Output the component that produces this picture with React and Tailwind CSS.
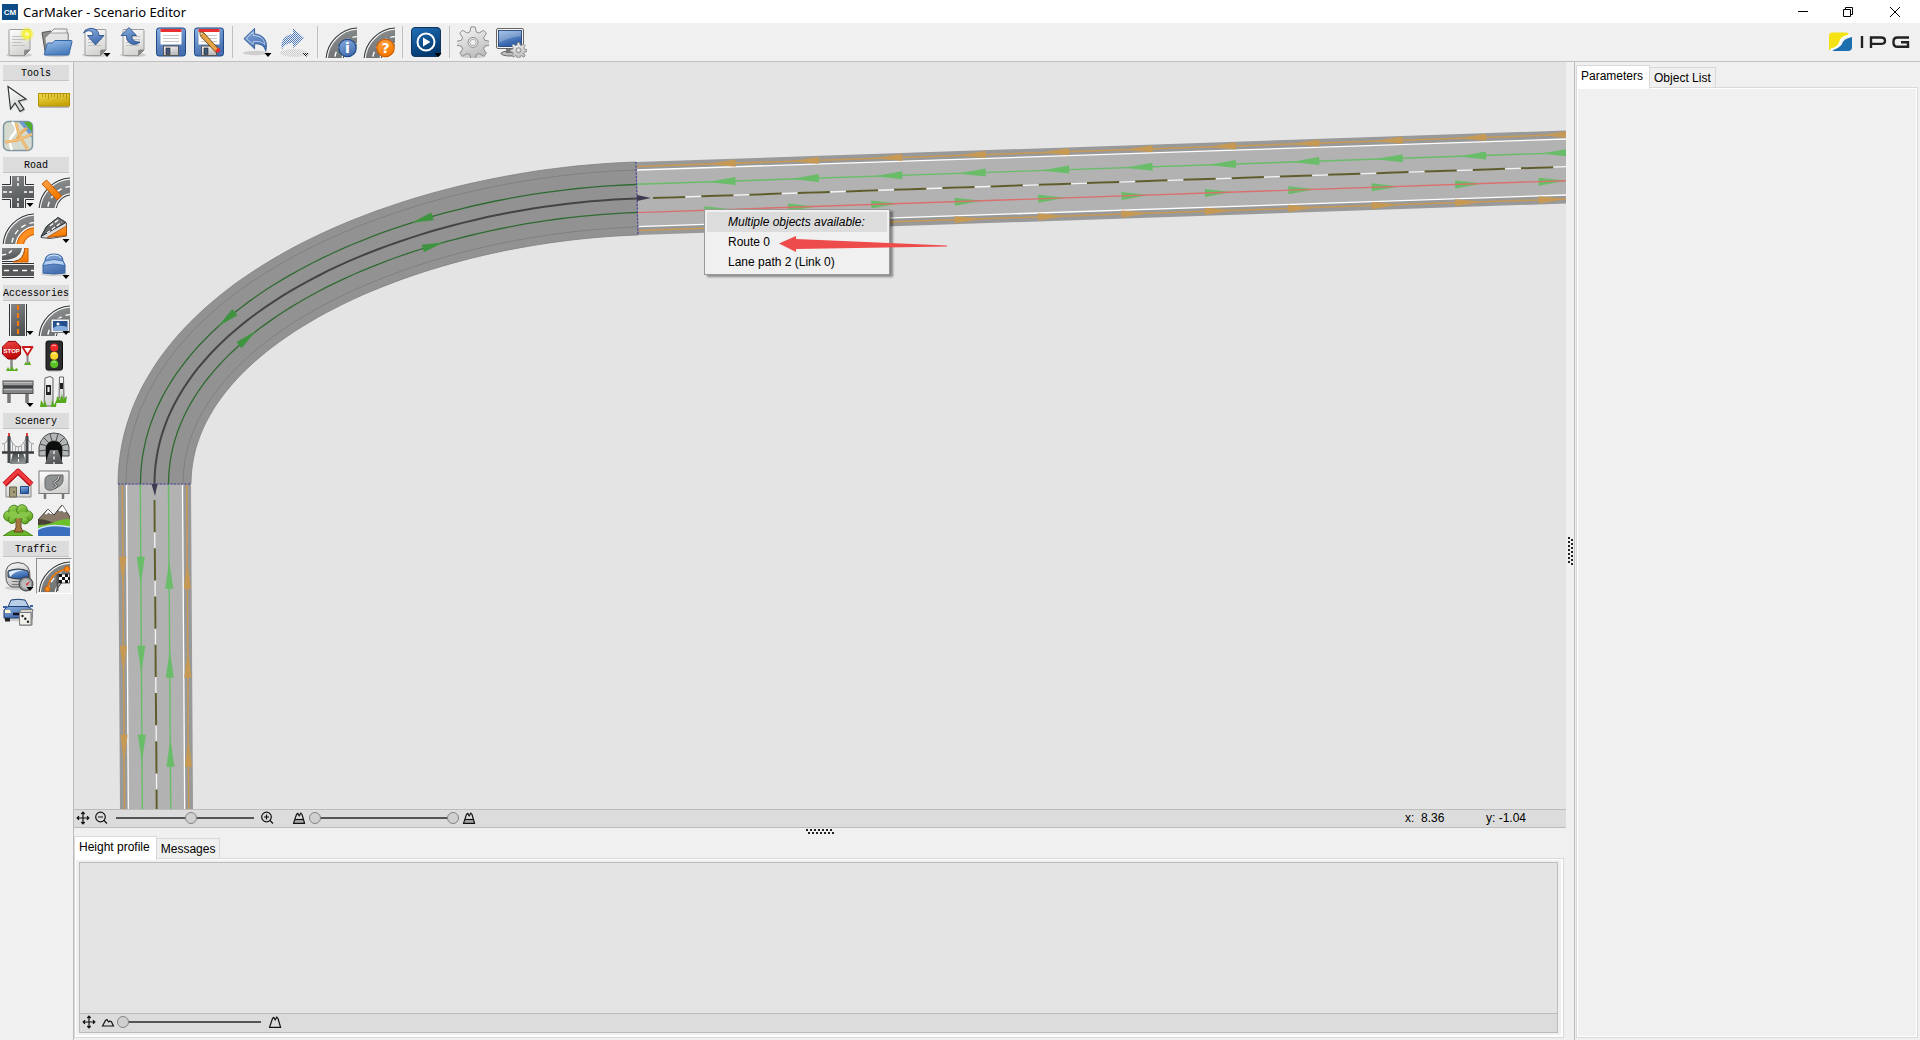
import React from "react";

/* ---------- shared gradients ---------- */
const GRADIENTS = [
  ["gPaper", "#ffffff", "#d4d4d2"],
  ["gBlue", "#9cc3ec", "#4a7dbd"],
  ["gDeep", "#1f6fb8", "#04396f"],
  ["gFloppy", "#8aaede", "#456fb0"],
  ["gMetal", "#fafafa", "#bcbcbc"],
  ["gDark", "#3e4244", "#8d9292"],
  ["gRoad", "#85898a", "#505455"],
  ["gOrange", "#ffa54a", "#f57900"],
  ["gGold", "#f2dc50", "#c9a508"],
  ["gGreen", "#a6dc6a", "#5ba318"],
  ["gRed", "#f04a4a", "#c00a0a"],
  ["gScreen", "#8fb4e4", "#2a5ba6"],
];

function Gradients() {
  return (
    <svg className="absolute h-0 w-0" aria-hidden="true">
      <defs>
        {GRADIENTS.map(([id, a, b]) => (
          <linearGradient key={id} id={id} x1="0" y1="0" x2="0.4" y2="1">
            <stop offset="0" stopColor={a} />
            <stop offset="1" stopColor={b} />
          </linearGradient>
        ))}
        <radialGradient id="gGlow">
          <stop offset="0" stopColor="#fffde0" />
          <stop offset="0.45" stopColor="#f6f02a" />
          <stop offset="1" stopColor="#f6f02a" stopOpacity="0" />
        </radialGradient>
      </defs>
    </svg>
  );
}

const Svg = ({ children }) => (
  <svg viewBox="0 0 32 32" className="block size-8" aria-hidden="true">{children}</svg>
);
const Caret = ({ color = "#000" }) => <path d="M24.500 27h7l-3.500 4z" fill={color} />;
const Shade = ({ y = 29, rx = 13 }) => <ellipse cx="16" cy={y} rx={rx} ry="2.2" fill="#000" opacity=".14" />;

const Sheet = () => (
  <>
    <Shade />
    <path d="M6 4.500q0-1 1-1h19q1 0 1 1V24l-5.500 5.500H7q-1 0-1-1z" fill="url(#gPaper)" stroke="#9b9d99" />
    <path d="M27 24h-4.500q-1 0-1 1v4.500z" fill="#8a8a88" stroke="#777" strokeWidth=".6" />
    <path d="M9 10.500h14M9 13.500h14M9 16.500h10M9 19.500h13" stroke="#c0c0c0" />
  </>
);

const Gear = ({ x, y, r }) => (
  <g transform={`translate(${x} ${y}) scale(${r / 16})`} stroke="#858784" strokeWidth={r > 10 ? 1 : 2}>
    <path
      fill="url(#gMetal)"
      strokeLinejoin="round"
      d="M-2.200-15h4.400l1.300 5.400 2.900 1.200 4.900-3 3 3.100-3 4.700 1.200 2.800 5.500 1.200v4l-5.500 1.200-1.200 2.900 3 4.700-3.100 3-4.700-2.900-3 1.200-1.200 5.300h-4.400l-1.200-5.300-3-1.200-4.700 2.900-3.100-3 3-4.700-1.200-2.900-5.500-1.200v-4l5.500-1.200 1.200-2.800-3-4.700 3-3.100 4.900 3 2.900-1.200z"
    />
    <circle r="5.300" cy="1.500" fill="#f0f0f0" />
    <circle r="3.400" cy="1.500" fill="none" strokeWidth=".7" />
  </g>
);

/* quarter bend of road */
const Bend = () => (
  <>
    <circle cx="34" cy="35" r="24.500" fill="none" stroke="#2e3436" strokeWidth="18" />
    <circle cx="34" cy="35" r="24.500" fill="none" stroke="#f4f4f4" strokeWidth="16" />
    <circle cx="34" cy="35" r="24.500" fill="none" stroke="url(#gRoad)" strokeWidth="13.500" />
    <circle cx="34" cy="35" r="24.500" fill="none" stroke="#fff" strokeWidth="1.400" strokeDasharray="5 4" />
  </>
);

const Badge = ({ fill, stroke, children }) => (
  <>
    <circle cx="22.500" cy="22" r="8.700" fill={fill} stroke={stroke} strokeWidth="1.200" />
    <text x="22.500" y="27" textAnchor="middle" fontFamily="DejaVu Sans, sans-serif" fontWeight="bold" fontSize="14" fill="#fff">{children}</text>
  </>
);

const Floppy = () => (
  <>
    <rect x="1.500" y="2" width="29" height="28" rx="2.500" fill="url(#gFloppy)" stroke="#204a87" />
    <rect x="5.500" y="3" width="21" height="15.500" fill="#fff" />
    <rect x="5.500" y="3" width="21" height="3" fill="#e83030" />
    <path d="M8 9.500h16M8 12.500h16M8 15.500h16" stroke="#c9c9c9" />
    <rect x="8.500" y="20" width="15" height="9.500" fill="url(#gMetal)" stroke="#555" />
    <rect x="11" y="22" width="4" height="6.500" fill="#44597a" stroke="#222" strokeWidth=".6" />
  </>
);

const CurvedArrow = "M1.500 12.500 13 1.500v6c10 .8 14.500 7.500 12 18.500-1.500-6-5-8-12-8v5.500z";

/* ---------- toolbar icons ---------- */
const NewFile = () => <Svg><Sheet /><circle cx="24" cy="8" r="7.500" fill="url(#gGlow)" /></Svg>;
const OpenFile = () => (
  <Svg>
    <Shade />
    <path d="M1 6.500 10 5l2 2h15v18H4z" fill="#8b8d8a" stroke="#555753" />
    <path d="M6 10 13 3h13v16H7z" fill="url(#gPaper)" stroke="#8b8d89" />
    <path d="m4 12 5-5h18v12H5z" fill="#e4e4e4" stroke="#888" strokeWidth=".7" />
    <path d="M4 29q-1 0-.6-1.500L6 18q.3-1 1.400-1h4l2.500-2.500H30q1.200 0 1 1.300L28 28q-.3 1-1.300 1z" fill="url(#gBlue)" stroke="#3465a4" />
  </Svg>
);
const ImportFile = () => (
  <Svg><Sheet /><path d="M4.500 7C8 0 20 1 20 9.500h5L16.500 19 8.500 9.500H14C14 4 9 3.500 4.500 7z" fill="url(#gFloppy)" stroke="#204a87" strokeWidth=".8" /><Caret /></Svg>
);
const ExportFile = () => (
  <Svg><Sheet /><path d="M23 16C18 21 9 18 9.500 9.500H4L12 1.500l7.500 8H15c-.5 5 3 6.500 8 6.500z" fill="url(#gFloppy)" stroke="#204a87" strokeWidth=".8" /></Svg>
);
const Save = () => <Svg><Floppy /></Svg>;
const SaveAs = () => (
  <Svg>
    <Floppy />
    <path d="m7 6 4 1 15 16.500-3 3L7.500 10z" fill="#e5a445" stroke="#6b4411" strokeWidth=".9" />
    <path d="m7 6 4 1-3.500 3z" fill="#f6e0b8" stroke="#6b4411" strokeWidth=".5" />
    <path d="m22 25 3.500-3.500 2 3-2.500 2.300z" fill="#ef2929" />
  </Svg>
);
const Undo = () => (
  <Svg>
    <Shade y={27} />
    <g transform="translate(2.500 1) scale(.93)">
      <path d={CurvedArrow} fill="url(#gFloppy)" stroke="#2f5a98" />
      <path d="m4 12.500 7.500-7v3.500c8 .5 12 4 12.500 10-3-3.500-7-3.500-12.500-3.500v3z" fill="none" stroke="#d5e4f8" strokeWidth="1" opacity=".8" />
    </g>
    <Caret />
  </Svg>
);
const Redo = () => (
  <Svg>
    <defs>
      <pattern id="stipple" width="2" height="2" patternUnits="userSpaceOnUse"><path d="M0 0h1v1H0zM1 1h1v1H1z" fill="#4d7abb" /></pattern>
      <pattern id="stippleGray" width="2" height="2" patternUnits="userSpaceOnUse"><path d="M0 0h1v1H0zM1 1h1v1H1z" fill="#cccccc" /></pattern>
      <pattern id="stippleInk" width="2" height="2" patternUnits="userSpaceOnUse"><path d="M0 0h1v1H0zM1 1h1v1H1z" fill="#111" /></pattern>
    </defs>
    <ellipse cx="16" cy="27" rx="14" ry="4" fill="url(#stippleGray)" />
    <path d="M26 12 15 2v6C6 9 2 15 4 24c2-5 5-7 11-7v5z" fill="url(#stipple)" />
    <path d="M24.500 27h7l-3.500 4z" fill="url(#stippleInk)" />
  </Svg>
);
const RoadInfo = () => <Svg><Bend /><Badge fill="url(#gFloppy)" stroke="#204a87">i</Badge></Svg>;
const RoadHelp = () => <Svg><Bend /><Badge fill="url(#gOrange)" stroke="#ce5c00">?</Badge></Svg>;
const Play = () => (
  <Svg>
    <rect x="1.500" y="1.500" width="29" height="29" rx="3.500" fill="url(#gDeep)" stroke="#14345c" />
    <circle cx="16" cy="16" r="8.500" fill="none" stroke="#fff" strokeWidth="2" />
    <path d="M13 11.500v9l7.500-4.500z" fill="#fff" />
    <Caret />
  </Svg>
);
const Settings = () => <Svg><Shade y={30} /><Gear x={16} y={15} r={15} /></Svg>;
const Display = () => (
  <Svg>
    <ellipse cx="15" cy="27.500" rx="9" ry="2.500" fill="#bbb" stroke="#666" />
    <path d="M11 22h8v5h-8z" fill="#777" />
    <rect x="1.500" y="2.500" width="27" height="20" rx="1.500" fill="#f4f4f4" stroke="#666" />
    <rect x="3.500" y="4.500" width="23" height="16" fill="url(#gScreen)" stroke="#16386c" strokeWidth=".8" />
    <path d="M4 5h22v5Q14 11 4 17z" fill="#fff" opacity=".22" />
    <Gear x={23.500} y={23.500} r={7.500} />
  </Svg>
);

/* ---------- side bar icons ---------- */
const Cursor = () => (
  <Svg>
    <path d="M7 4 26 16.500l-8 2 5 8-3.500 2.500-5.500-8.500-5 6z" fill="#000" opacity=".15" />
    <path d="M6 2.500 24 15l-7.500 2 5.500 8-4 2.500-5-8.500-4.500 6z" fill="url(#gPaper)" stroke="#2e3436" strokeWidth="1.200" />
  </Svg>
);
const Ruler = () => (
  <Svg>
    <rect x="1" y="10" width="30" height="14" rx="1" fill="#000" opacity=".25" />
    <rect x=".5" y="9.500" width="31" height="12.500" fill="url(#gGold)" stroke="#b39200" />
    <path d="M4.500 10v3M7.500 10v3M10.500 10v5M13.500 10v3M16.500 10v3M19.500 10v5M22.500 10v3M25.500 10v3M28.500 10v5" stroke="#a88b12" strokeWidth=".8" />
  </Svg>
);
const MapIcon = () => (
  <Svg>
    <rect x="1.500" y="1.500" width="29" height="29" rx="5" fill="#d5dbcf" stroke="#7e95a0" strokeWidth="1.500" />
    <path d="M21 2h7q2 1 2 4v10z" fill="#4caf26" />
    <path d="m17 2 13 16v-6L22 2z" fill="#6c9ad0" />
    <path d="M10 2q8 7 0 14-4 5 0 14" fill="none" stroke="#fff" strokeWidth="2.500" />
    <path d="M14 3q2 12 12 27M3 22q14-1 27-8M14 22Q16 14 25 8" fill="none" stroke="#e9b064" strokeWidth="2.800" />
    <path d="M14 3q2 12 12 27M3 22q14-1 27-8" fill="none" stroke="#f3cc8c" strokeWidth="1" />
  </Svg>
);
const Crossing = () => (
  <Svg>
    <path d="M8.500 0v8.500H0M23.500 0v8.500H32M8.500 32v-8.500H0M23.500 32v-8.500H32" fill="none" stroke="#2e3436" />
    <path d="M10 0h12v10h10v12H22v10H10V22H0V10h10z" fill="url(#gRoad)" />
    <path d="M16 1v4M16 7v3M16 22v3M16 27v4M1 16h4M7 16h3M22 16h3M27 16h4" stroke="#fff" strokeWidth="1.400" />
    <Caret />
  </Svg>
);
const BendSection = () => <Svg><Bend /><path d="m4 8 4.500-4 15 16-4.500 4z" fill="url(#gOrange)" stroke="#ce5c00" /></Svg>;
const BendOrange = () => (
  <Svg>
    <Bend />
    <circle cx="34" cy="35" r="16.500" fill="none" stroke="#fff" strokeWidth="9" />
    <circle cx="34" cy="35" r="16" fill="none" stroke="#ce5c00" strokeWidth="7.500" />
    <circle cx="34" cy="35" r="16" fill="none" stroke="#ff8f20" strokeWidth="5.500" />
  </Svg>
);
const Slope = () => (
  <Svg>
    <path d="M3 25.500 8 15l12-9.500 8.500 5.500v13L12 26.500z" fill="#ddd" stroke="#555" />
    <path d="M3 24.500 9 14 20 5.500l8 5z" fill="url(#gRoad)" stroke="#2e3436" />
    <path d="m9 21 15-11M12 14l8-6" stroke="#fff" strokeWidth="1.200" strokeDasharray="4 2" />
    <path d="M9 25.500 28.500 14v9.500z" fill="url(#gOrange)" stroke="#a84b00" strokeWidth=".8" />
    <Caret />
  </Svg>
);
const Junction = () => (
  <Svg>
    <path d="M0 13.500h12Q22 12 23 0" fill="none" stroke="#2e3436" />
    <path d="M0 0h20q-2 12-20 12z" fill="url(#gRoad)" />
    <path d="M0 7q9-1 11-7" fill="none" stroke="#fff" strokeWidth="1.500" strokeDasharray="4 3" />
    <path d="M11 14q11-1 12-14h3v14z" fill="url(#gOrange)" stroke="#ce5c00" />
    <path d="M0 15.500h32M0 29.500h32" stroke="#2e3436" />
    <path d="M0 17h32v11H0z" fill="#55595a" />
    <path d="M2 22.500h5M11 22.500h5M20 22.500h5M29 22.500h3" stroke="#fff" strokeWidth="1.500" />
  </Svg>
);
const Dome = () => (
  <Svg>
    <Shade y={26} />
    <path d="M7 13Q7 6 16 6t9 7l2 4v8q-11 2-22 0v-8z" fill="url(#gFloppy)" stroke="#3565a5" />
    <path d="M7 13q9-3 18 0l2 4.500q-11-3-22 0z" fill="#b5d0f1" stroke="#3565a5" strokeWidth=".8" />
    <path d="M9 10q2-3 7-3t7 3" fill="none" stroke="#dbe9fa" />
    <Caret />
  </Svg>
);
const StraightRoad = () => (
  <Svg>
    <path d="M7.500 0v32M24.500 0v32" stroke="#2e3436" />
    <path d="M9 0h14v32H9z" fill="url(#gRoad)" />
    <path d="M16 1v5M16 9v5M16 17v5M16 25v5" stroke="#f57900" strokeWidth="2.200" />
    <Caret />
  </Svg>
);
const RoadPicture = () => (
  <Svg>
    <Bend />
    <rect x="13" y="15" width="18.500" height="13.500" fill="#f2f2f2" stroke="#777" />
    <rect x="15" y="17" width="14.500" height="9.500" fill="#24508c" />
    <path d="M15 24q5-4 14.500-1v3.500H15z" fill="#86aede" /><circle cx="20" cy="20" r="1.500" fill="#fff" />
    <Caret />
  </Svg>
);
const Signs = () => (
  <Svg>
    <path d="M9.500 17v14" stroke="#888" strokeWidth="2.500" />
    <path d="M25.500 13v11" stroke="#888" strokeWidth="2" />
    <path d="m4 31 2-4 2 3 2-4 2 4 3-2 1 3zM22 25l1.500-3 2 2 2-3 1.500 4z" fill="#5aae1c" />
    <path d="m6 1.500 7.500-.2 5 5v8L13.500 19H6l-5.500-5V7z" fill="url(#gRed)" stroke="#8d0707" />
    <text x="9.700" y="12.500" textAnchor="middle" fontFamily="Liberation Sans, sans-serif" fontWeight="bold" fontSize="6" fill="#fff">STOP</text>
    <path d="M20.500 7h10l-5 8z" fill="#fff" stroke="#cc1a1a" strokeWidth="1.800" strokeLinejoin="round" />
  </Svg>
);
const TrafficLight = () => (
  <Svg>
    <Shade y={30} rx={9} />
    <rect x="8" y="1" width="16.500" height="29" rx="2" fill="#2b2d2e" stroke="#0f0f0f" />
    <circle cx="16.200" cy="7.500" r="4" fill="#f02828" /><circle cx="16.200" cy="15.700" r="4" fill="#fcd62c" /><circle cx="16.200" cy="24" r="4" fill="#58c322" />
    <path d="M14 6q2-2 4 0M14 14q2-2 4 0M14 22.500q2-2 4 0" stroke="#fff" fill="none" opacity=".7" />
  </Svg>
);
const GuardRail = () => (
  <Svg>
    <path d="M7 17v10M25 17v10" stroke="#777" strokeWidth="3.500" />
    <rect x="1" y="5" width="30" height="5" fill="#9b9b9b" stroke="#4f5152" />
    <rect x="1" y="9.500" width="30" height="3" fill="#3f4243" />
    <rect x="1" y="12" width="30" height="5.500" fill="#858888" stroke="#4f5152" />
    <path d="M1.500 6.500h29M1.500 13.500h29" stroke="#ccc" strokeWidth=".8" />
    <Caret />
  </Svg>
);
const Posts = () => (
  <Svg>
    <path d="m6 30 1-28 5-1.500L15 2v28z" fill="url(#gPaper)" stroke="#666" />
    <path d="M8 9h5v10H8z" fill="#222" /><path d="M9.500 11h2v5h-2z" fill="#eee" />
    <path d="m21 22 .5-21h4L26 22z" fill="url(#gPaper)" stroke="#666" /><path d="M22 7h3v6h-3z" fill="#222" />
    <path d="m2 31 1-7 3 5 1-5 2 7zM13 31l1-7 2 5 3-6-1 8zM18 27l1-7 3 4 2-6 1 5 4-3-1 7z" fill="#56aa1b" />
  </Svg>
);
const Bridge = () => (
  <Svg>
    <path d="m11 21-3 11h17l-4-11z" fill="url(#gDark)" /><path d="M16.500 22v10" stroke="#fff" strokeDasharray="3 2" />
    <path d="M0 12q5 0 7-8 9 22 18 0 2 8 7 8" fill="none" stroke="#999" />
    <path d="M2.500 12v8M10.500 11v9M13.500 14v6M16.500 15v5M19.500 14v6M22.500 11v9M29.500 12v8" stroke="#aaa" />
    <path d="M0 20.500h32" stroke="#3a3d3e" strokeWidth="2.500" />
    <path d="M7 4v27M25 4v27" stroke="#44484a" strokeWidth="3" />
    <path d="M7 1v3M25 1v3" stroke="#e23b3b" strokeWidth="2" />
  </Svg>
);
const Tunnel = () => (
  <Svg>
    <path d="M1 24V15Q4 1 16 1t15 14v9h-7v-9q-2-6-8-6t-8 6v9z" fill="#b2b6b6" stroke="#4a4d4e" />
    <path d="m1 19 7-1M2 12l7 2M6 6l5 5M12 2l2 7M20 2l-2 7M26 6l-5 5M30 12l-7 2M31 19l-7-1" stroke="#4a4d4e" />
    <path d="M8 32V15q2-6 8-6t8 6v17z" fill="#0c0d0d" />
    <path d="m12 18-5 14h18l-5-14z" fill="url(#gRoad)" /><path d="M16 19v13" stroke="#fff" strokeWidth="1.200" strokeDasharray="3 2.500" />
  </Svg>
);
const House = () => (
  <Svg>
    <path d="M4 16v13h25V16L16 5z" fill="url(#gPaper)" stroke="#888" />
    <path d="M2.500 16.500 16 3.500l13.500 13" fill="none" stroke="#b40f16" strokeWidth="5.500" strokeLinejoin="round" />
    <path d="M2.500 16 16 3l13.500 13" fill="none" stroke="#f03a3e" strokeWidth="3.500" strokeLinejoin="round" />
    <path d="M7.500 19h7v10h-7z" fill="#a39a78" stroke="#6b6650" /><path d="M12 23v2" stroke="#333" />
    <path d="M18.500 18.500h8v7h-8z" fill="url(#gScreen)" stroke="#204a87" />
  </Svg>
);
const Board = () => (
  <Svg>
    <path d="M7 25v6M25 25v6" stroke="#777" strokeWidth="2.500" />
    <rect x="1" y="3" width="30" height="22.500" fill="url(#gPaper)" stroke="#777" />
    <path d="M7 12q0-4 5-5h13v6q-1 4-5 6l-6 3q-7 1-7-4z" fill="#8f9292" stroke="#666" />
    <path d="M21 7.500q1 4-4 6-3 2 1 3 2 1-2 4" fill="none" stroke="#555" strokeWidth="2.400" />
    <path d="M21 7.500q1 4-4 6-3 2 1 3 2 1-2 4" fill="none" stroke="#ddd" strokeWidth="1" />
  </Svg>
);
const Tree = () => (
  <Svg>
    <path d="M1 32q15-13 30 0z" fill="#6ab62e" stroke="#3b7a0c" strokeWidth=".8" />
    <path d="M14 17q1 7-2 11h9q-3-4-2-11l4-4-5 2-2-3-2 3-5-2z" fill="#a5763f" stroke="#694620" />
    <g fill="url(#gGreen)" stroke="#3f7a16" strokeWidth=".9"><circle cx="7" cy="12" r="5.300" /><circle cx="25.500" cy="12" r="5.300" /><circle cx="10" cy="16" r="3.500" /><circle cx="23" cy="16.500" r="3.500" /><circle cx="12" cy="6.500" r="5.300" /><circle cx="20" cy="6" r="5.300" /></g>
    <path d="M7 8q9-3 9 4 2-7 10-3v4q-10 3-19 0z" fill="#86c74a" />
  </Svg>
);
const Landscape = () => (
  <Svg>
    <path d="M0 16 10 5l6 6 8-10 8 12v6H0z" fill="#8a7a6a" stroke="#3d342c" />
    <path d="m6 10 4-5 5 5-2.500.5-2-1.500-2 2zM20 6.500 24.500 1l4.500 7-3 1-2-2-2 1z" fill="#fff" stroke="#555" strokeWidth=".6" />
    <path d="M0 16q8-2 14 3 8-4 18-4v10H0z" fill="#6cc02a" />
    <path d="M0 15.500q8-1 14 3.500-6 2-14 2z" fill="#4a4038" />
    <path d="M0 26q12-8 32-3v9H0z" fill="#3a6fc0" /><path d="M0 25q12-6 32-2" stroke="#d0e4fa" fill="none" strokeWidth="1.500" />
  </Svg>
);
const Helmet = () => (
  <Svg>
    <Shade y={28} />
    <path d="M4 17Q2 3 16 2.500 29 3 28 18q-1 8-7 9H10q-6-2-6-10z" fill="url(#gMetal)" stroke="#555" />
    <path d="M6 11q10-4 20 0l1 6q-10 4-21 0z" fill="url(#gScreen)" stroke="#2e3436" />
    <path d="M7 12q8-3 14-1.500-8 0-13 6.500z" fill="#e3eefb" />
    <path d="M10 21.500h8M10 24.500h7" stroke="#777" />
    <circle cx="24" cy="24" r="7" fill="#8c9091" stroke="#3a3d3e" /><circle cx="24" cy="24" r="5" fill="#b9bcbc" />
    <path d="m24 24 4-3-3 5z" fill="#e02020" />
    <Caret />
  </Svg>
);
const RouteIcon = () => (
  <Svg>
    <Bend />
    <path d="M9.500 29Q12 12 29 9" fill="none" stroke="#f57900" strokeWidth="1.500" />
    <circle cx="9.500" cy="29" r="2.600" fill="#ff8c1a" stroke="#ce5c00" /><circle cx="29" cy="9" r="2.600" fill="#ff8c1a" stroke="#ce5c00" />
    <path d="M19.500 14v17" stroke="#555" strokeWidth="2" />
    <path d="M20.500 14h11v9h-11z" fill="#fff" stroke="#222" strokeWidth=".7" />
    <path d="M21 14h3v3h-3zM27 14h3v3h-3zM24 17h3v3h-3zM30 17h2v3h-2zM21 20h3v3h-3zM27 20h3v3h-3z" fill="#111" />
  </Svg>
);
const TrafficCar = () => (
  <Svg>
    <Shade y={23} rx={15} />
    <path d="m6 11 3-7q7-1.500 14 0l4 7z" fill="#b9cfe8" stroke="#1d3f73" />
    <path d="M2 14q2-3 5-3.500h18q4 .5 5 3.500v8H2z" fill="url(#gFloppy)" stroke="#1d3f73" />
    <path d="M3 22h5v3.500H3z" fill="#222" />
    <path d="M3 14h5l1 3H3zM24 14h5v2h-5z" fill="#fff7c8" /><path d="M11 18h9" stroke="#112" strokeWidth="2.500" />
    <path d="M1 10h4v2H1zM28 9h3v2h-3z" fill="#3b62a6" />
    <path d="m17.500 16 2-2.500H31l-1 3V29H17.500z" fill="#d5d5cf" stroke="#777" />
    <path d="M17.500 16.500H29V29H17.500z" fill="#f0f0ea" stroke="#777" />
    <circle cx="20.500" cy="20" r="1.200" fill="#222" /><circle cx="23.300" cy="22.800" r="1.200" fill="#222" /><circle cx="26" cy="25.700" r="1.200" fill="#222" />
  </Svg>
);

/* ---------- top bars ---------- */
function TitleBar() {
  return (
    <header className="flex h-[23px] shrink-0 items-center bg-white pl-0.5">
      <svg viewBox="0 0 16 16" className="size-4" aria-hidden="true">
        <rect width="16" height="16" fill="#0c4d86" />
        <text x="8" y="11" textAnchor="middle" fontFamily="Liberation Sans, sans-serif" fontWeight="bold" fontSize="8" fill="#fff">CM</text>
      </svg>
      <h1 className="ml-[5px] flex-1 font-['Noto_Sans','Open_Sans',sans-serif] text-[13px] leading-5">CarMaker - Scenario Editor</h1>
      <button type="button" aria-label="Minimize" className="flex h-full w-[46px] items-center justify-center">
        <svg viewBox="0 0 10 10" className="size-2.5"><path d="M0 4.500h10" stroke="#000" /></svg>
      </button>
      <button type="button" aria-label="Restore" className="flex h-full w-11 items-center justify-center">
        <svg viewBox="0 0 10 10" className="size-2.5"><path d="M.5 2.500h7v7h-7zM2.500 2.500v-2h7v7h-2" fill="none" stroke="#000" /></svg>
      </button>
      <button type="button" aria-label="Close" className="flex h-full w-[50px] items-center justify-center">
        <svg viewBox="0 0 10 10" className="size-2.5"><path d="m0 0 10 10M10 0 0 10" fill="none" stroke="#000" /></svg>
      </button>
    </header>
  );
}

const TOOLBAR = [
  [["New", NewFile], ["Open", OpenFile], ["Import", ImportFile], ["Export", ExportFile], ["Save", Save], ["Save as", SaveAs]],
  [["Undo", Undo], ["Redo", Redo]],
  [["Road info", RoadInfo], ["Road help", RoadHelp]],
  [["Start simulation", Play]],
  [["Settings", Settings], ["Display settings", Display]],
];

function Logo() {
  return (
    <svg viewBox="0 0 84 24" className="mr-2 h-6 w-[84px]" aria-label="IPG" role="img">
      <path d="M4 2.500h13q5 0 3 2.500l-3 3q-5 1-5 5-1 5-11 7V6q0-3.500 3-3.500z" fill="#f4e214" />
      <path d="M24 7v10q0 4-4 4H8q-5 0-3-2 7-1 9-5 1-5 10-7z" fill="#1b6fae" />
      <path d="M22 5.500q-9 1-10 7-1 5-9 7" fill="none" stroke="#fff" strokeWidth="2" />
      <g fill="none" stroke="#222" strokeWidth="2.400">
        <path d="M34 6v12M43 18V7.500h10q4 0 4 3.200t-4 3.200H43M81 7.500H69.500q-4 0-4 4v1.300q0 4 4 4H80v-4.500h-7" />
      </g>
    </svg>
  );
}

function Toolbar() {
  return (
    <div role="toolbar" className="flex h-[39px] shrink-0 items-center border-b border-[#c0c0c0]">
      {TOOLBAR.map((group, i) => (
        <React.Fragment key={i}>
          {i > 0 && <span className="mx-1 h-8 w-px bg-[#c0c0c0]" />}
          {group.map(([name, Icon]) => (
            <button key={name} type="button" aria-label={name} className="px-[3px]"><Icon /></button>
          ))}
        </React.Fragment>
      ))}
      <div className="flex-1" />
      <Logo />
    </div>
  );
}

/* ---------- side bar ---------- */
const SECTIONS = [
  ["Tools", [["Select", Cursor], ["Measure", Ruler], ["Map", MapIcon]]],
  ["Road", [["Junction", Crossing], ["Section", BendSection], ["Lane", BendOrange], ["Elevation", Slope], ["Ramp", Junction], ["Bump", Dome]]],
  ["Accessories", [["Marking", StraightRoad], ["Road painting", RoadPicture], ["Signs", Signs], ["Traffic light", TrafficLight], ["Guard rail", GuardRail], ["Guide posts", Posts]]],
  ["Scenery", [["Bridge", Bridge], ["Tunnel", Tunnel], ["Building", House], ["Sign plate", Board], ["Tree", Tree], ["Terrain", Landscape]]],
  ["Traffic", [["Driver", Helmet], ["Route", RouteIcon], ["Traffic object", TrafficCar]]],
];

function SideBar() {
  return (
    <nav className="w-[74px] shrink-0 border-r border-[#bcbcbc] pt-[3px]">
      {SECTIONS.map(([title, tools]) => (
        <section key={title} className="pb-[3px]">
          <h2 className="ml-[3px] mb-px flex h-4 w-[66px] items-center justify-center border-b border-[#c4c4c4] bg-[#dcdcdc] pt-px font-['Liberation_Mono',monospace] text-[10px]">{title}</h2>
          <div className="grid w-[72px] grid-cols-2">
            {tools.map(([name, Icon]) => (
              <button
                key={name}
                type="button"
                aria-label={name}
                aria-pressed={name === "Route"}
                className={"flex size-9 items-center justify-center " + (name === "Route" ? "border border-t-[#909090] border-r-white border-b-white border-l-[#909090]" : "")}
              >
                <Icon />
              </button>
            ))}
          </div>
        </section>
      ))}
    </nav>
  );
}

/* ---------- road drawing ---------- */
const P = [[637, 198.5], [407, 206], [154.5, 314], [154.5, 484]];

function bendPoint(t, off) {
  const u = 1 - t;
  const at = (k) => u * u * u * P[0][k] + 3 * u * u * t * P[1][k] + 3 * u * t * t * P[2][k] + t * t * t * P[3][k];
  const d = (k) => 3 * (u * u * (P[1][k] - P[0][k]) + 2 * u * t * (P[2][k] - P[1][k]) + t * t * (P[3][k] - P[2][k]));
  const dx = d(0), dy = d(1), len = Math.hypot(dx, dy);
  return { x: at(0) - (dy / len) * off, y: at(1) + (dx / len) * off, a: (Math.atan2(dy, dx) * 180) / Math.PI };
}
const range = (n) => Array.from({ length: n }, (_, i) => i);
const bendLine = (off) => range(61).map((i) => { const p = bendPoint(i / 60, off); return `${p.x.toFixed(1)} ${p.y.toFixed(1)}`; });

const lerp = (a, b, f) => a + (b - a) * f;
const eastY = (y0, y1, x) => lerp(y0, y1, (x - 637) / 929);
const southX = (x0, x1, y) => lerp(x0, x1, (y - 484) / 325);

const GREEN = "#69bd69";
const AMBER = "#c69a55";

function Marker({ x, y, angle, half, fill }) {
  return <path d={`M0 ${-half} 28 0 0 ${half}z`} fill={fill} transform={`translate(${x} ${y}) rotate(${angle})`} />;
}

function EastRoad() {
  const line = (y0, y1, props) => <line x1="637" y1={y0} x2="1566" y2={y1} {...props} />;
  return (
    <g>
      <path d="M636 162 1566 130.500V203.500L638 235z" fill="#999" />
      <path d="M636 170 1566 139V195L638 227z" fill="#b2b2b2" />
      {line(170, 139, { stroke: "#fff", strokeWidth: 1.3 })}
      {line(226.7, 195, { stroke: "#fff", strokeWidth: 1.3 })}
      {line(166.5, 134.5, { stroke: AMBER, strokeWidth: 1.5 })}
      {line(230.5, 199, { stroke: AMBER, strokeWidth: 1.5 })}
      {line(184.3, 152.7, { stroke: GREEN, strokeWidth: 1.4 })}
      <line x1="653" y1="198" x2="1566" y2="166.700" stroke="#f4f4f4" strokeWidth="1.300" />
      <line x1="653" y1="198" x2="1566" y2="166.700" stroke="#5e5c2c" strokeWidth="2" strokeDasharray="32.250 16" />
      {range(11).map((i) => {
        const left = 735.5 + i * 83.4;
        const right = 704.5 + i * 83.4;
        return (
          <g key={i}>
            <Marker x={left} y={eastY(166.5, 134.5, left)} angle={178} half={3.6} fill={AMBER} />
            <Marker x={left} y={eastY(184.3, 152.7, left)} angle={178} half={4} fill={GREEN} />
            <Marker x={right} y={eastY(212.6, 180.7, right)} angle={-2} half={4} fill={GREEN} />
            <Marker x={right} y={eastY(230.5, 199, right)} angle={-2} half={3.6} fill={AMBER} />
          </g>
        );
      })}
      {line(212.6, 180.7, { stroke: "#d9706e", strokeWidth: 1.4 })}
    </g>
  );
}

function SouthRoad() {
  const line = (x0, x1, props) => <line x1={x0} y1="484" x2={x1} y2="809" {...props} />;
  return (
    <g>
      <path d="M118 484H191L193 809H120z" fill="#999" />
      <path d="M126.500 484H182.500L184.700 809H128.300z" fill="#b2b2b2" />
      {line(126.5, 128.3, { stroke: "#fff", strokeWidth: 1.3 })}
      {line(182.5, 184.7, { stroke: "#fff", strokeWidth: 1.3 })}
      {line(122.3, 124.5, { stroke: AMBER, strokeWidth: 1.5 })}
      {line(186.7, 188.7, { stroke: AMBER, strokeWidth: 1.5 })}
      {line(140.3, 142.3, { stroke: GREEN, strokeWidth: 1.4 })}
      {line(168.5, 170.7, { stroke: GREEN, strokeWidth: 1.4 })}
      <line x1="154.500" y1="500" x2="156.700" y2="809" stroke="#f4f4f4" strokeWidth="1.300" />
      <line x1="154.500" y1="500" x2="156.700" y2="809" stroke="#5e5c2c" strokeWidth="2" strokeDasharray="32.250 16" />
      {range(3).map((i) => {
        const down = 556.7 + i * 89;
        const up = 588.7 + i * 89;
        return (
          <g key={i}>
            <Marker x={southX(122.3, 124.5, down)} y={down} angle={90} half={3.6} fill={AMBER} />
            <Marker x={southX(140.3, 142.3, down)} y={down} angle={90} half={4} fill={GREEN} />
            <Marker x={southX(168.5, 170.7, up)} y={up} angle={-90} half={4} fill={GREEN} />
            <Marker x={southX(186.7, 188.7, up)} y={up} angle={-90} half={3.6} fill={AMBER} />
          </g>
        );
      })}
    </g>
  );
}

function BendRoad() {
  const outline = "M" + bendLine(36.5).join("L") + "L" + bendLine(-36.5).reverse().join("L") + "z";
  const path = (off) => "M" + bendLine(off).join("L");
  const marks = [[0.308, -14, 0], [0.65, -14, 0], [0.303, 14, 180], [0.643, 14, 180]];
  return (
    <g>
      <path d={outline} fill="#929292" stroke="#808080" strokeWidth=".8" />
      <path d={path(28.5)} fill="none" stroke="#808080" />
      <path d={path(-28.5)} fill="none" stroke="#808080" />
      <path d={path(14)} fill="none" stroke="#2f6b31" strokeWidth="1.300" />
      <path d={path(-14)} fill="none" stroke="#2f6b31" strokeWidth="1.300" />
      <path d={path(0)} fill="none" stroke="#444347" strokeWidth="2" />
      {marks.map(([t, off, turn]) => {
        const p = bendPoint(t, -off);
        return <path key={`${t}`} d="M-11-4 11 0-11 4z" fill="#3f9440" transform={`translate(${p.x} ${p.y}) rotate(${p.a + turn})`} />;
      })}
      <path d="M636 162 638 235M118 484H191" stroke="#4b49a5" strokeWidth="1.200" strokeDasharray="2 1.500" />
      <path d="M637 195v6l14-3zM151.500 484h6l-2.500 12z" fill="#3c3b50" />
    </g>
  );
}

/* ---------- small controls ---------- */
const RANGE =
  "block h-3 appearance-none bg-transparent outline-none " +
  "[&::-webkit-slider-runnable-track]:h-0.5 [&::-webkit-slider-runnable-track]:bg-[#555] " +
  "[&::-webkit-slider-thumb]:-mt-[5px] [&::-webkit-slider-thumb]:size-3 [&::-webkit-slider-thumb]:appearance-none [&::-webkit-slider-thumb]:rounded-full [&::-webkit-slider-thumb]:border [&::-webkit-slider-thumb]:border-[#858585] [&::-webkit-slider-thumb]:bg-[#d0d0d0] ";

const Mini = ({ label, className = "", children }) => (
  <button type="button" aria-label={label} className={"size-3 " + className}>
    <svg viewBox="0 0 12 12" className="block size-3 overflow-visible" fill="none" stroke="#111" strokeWidth="1.200">{children}</svg>
  </button>
);
const MoveGlyph = () => <path d="M6 0v12M0 6h12M4.300 2 6 .2 7.700 2M4.300 10 6 11.800 7.700 10M2 4.300.2 6 2 7.700M10 4.300 11.800 6 10 7.700" />;
const Lens = ({ plus }) => <><circle cx="5.500" cy="5" r="4.800" /><path d={plus ? "M9 8.500l3 3M3 5h5M5.500 2.500v5" : "M9 8.500l3 3M3 5h5"} /></>;
const Peaks = ({ filled }) => (
  <>
    {filled && <path d="M2 7.500h8l1.500 3.500h-11z" fill="#a8a8a8" stroke="none" />}
    <path d="M.5 11.400 3.500 2.500 4.800 1.300 6.200 4 7.800 1 9 2.500l2.600 8.900z" strokeLinejoin="round" />
    {filled && <path d="M2 7.500h8" />}
  </>
);

function CanvasBar() {
  return (
    <div className="flex h-[19px] shrink-0 items-center border-y border-[#bcbcbc] bg-[#dcdcdc] pb-px pl-[3px] text-[12px]">
      <Mini label="Fit view"><MoveGlyph /></Mini>
      <Mini label="Zoom out" className="ml-1.5"><Lens /></Mini>
      <input aria-label="Zoom" type="range" defaultValue="55" className={RANGE + "ml-[9px] w-[138px]"} />
      <Mini label="Zoom in" className="ml-[7px]"><Lens plus /></Mini>
      <Mini label="Lower height" className="ml-5"><Peaks filled /></Mini>
      <div className="relative ml-1 h-3 w-[150px]">
        <input aria-label="Minimum height" type="range" defaultValue="0" className={RANGE + "absolute inset-0 w-full"} />
        <input aria-label="Maximum height" type="range" defaultValue="100" className={RANGE + "absolute inset-0 w-full [&::-webkit-slider-runnable-track]:bg-transparent"} />
      </div>
      <Mini label="Upper height" className="ml-1"><Peaks filled /></Mini>
      <div className="flex-1" />
      <output className="w-[81px] whitespace-pre">x:  8.36</output>
      <output className="w-20 whitespace-pre">y: -1.04</output>
    </div>
  );
}

function ContextMenu() {
  return (
    <div role="menu" className="absolute left-[630px] top-[147px] w-[186px] border border-[#999] bg-[#f0f0f0] p-0.5 text-[12px] leading-5 shadow-[3px_2px_2px_rgba(0,0,0,0.4)]">
      <div className="bg-[#dcdcdc] pl-[21px] italic whitespace-nowrap">Multiple objects available:</div>
      <button type="button" role="menuitem" className="block w-full pl-[21px] text-left">Route 0</button>
      <button type="button" role="menuitem" className="block w-full pl-[21px] text-left">Lane path 2 (Link 0)</button>
      <svg viewBox="0 0 168 16" className="absolute left-[74px] top-[26px] h-4 w-[168px]" aria-hidden="true">
        <path d="M0 7.500 17 0v3l151 6.500v1L17 13v3z" fill="#ee4b4b" />
      </svg>
    </div>
  );
}

function Viewport() {
  return (
    <div className="relative min-h-0 flex-1 overflow-hidden bg-[#e4e4e4]">
      <svg viewBox="74 62 1492 747" preserveAspectRatio="xMinYMin slice" className="absolute inset-0 h-full w-full" role="img" aria-label="Road network">
        <EastRoad />
        <SouthRoad />
        <BendRoad />
      </svg>
      <ContextMenu />
    </div>
  );
}

function Tabs({ names }) {
  return (
    <div role="tablist" className="flex h-[22px] shrink-0 items-end text-[12px]">
      {names.map((n, i) =>
        i === 0 ? (
          <button key={n} type="button" role="tab" aria-selected="true" className="relative z-10 -mb-0.5 h-6 border border-b-0 border-[#d9d9d9] bg-white pb-1 pl-1 pr-1.5">{n}</button>
        ) : (
          <button key={n} type="button" role="tab" aria-selected="false" className="h-5 border border-l-0 border-b-0 border-[#d9d9d9] px-1">{n}</button>
        )
      )}
    </div>
  );
}

const Grip = ({ vertical }) => (
  <svg viewBox={vertical ? "0 0 6 28" : "0 0 28 6"} className={vertical ? "h-7 w-1.5" : "h-1.5 w-7"} aria-hidden="true">
    {range(7).map((i) =>
      vertical ? (
        <g key={i}><rect x="0" y={i * 4} width="2" height="2" fill="#222" /><rect x="3" y={i * 4 + 2} width="2" height="2" fill="#222" /></g>
      ) : (
        <g key={i}><rect x={i * 4} y="0" width="2" height="2" fill="#222" /><rect x={i * 4 + 2} y="3" width="2" height="2" fill="#222" /></g>
      )
    )}
  </svg>
);

function HeightPanel() {
  return (
    <section className="mr-0.5 flex h-[204px] shrink-0 flex-col pb-0.5">
      <Tabs names={["Height profile", "Messages"]} />
      <div className="flex flex-1 flex-col border border-[#d9d9d9] bg-white p-px pb-0.5 pr-0.5">
        <div className="flex flex-1 flex-col bg-[#f0f0f0] pb-0.5 pl-[3px] pr-[3px] pt-0.5">
          <div className="flex flex-1 flex-col border border-[#bcbcbc] bg-[#e4e4e4]">
            <div className="flex-1" />
            <div className="flex h-[19px] items-center border-t border-[#bcbcbc] bg-[#dcdcdc] pb-0.5 pl-[3px]">
              <Mini label="Fit profile"><MoveGlyph /></Mini>
              <Mini label="Flatten" className="ml-[7px]"><path d="M.5 10 3.500 4.500 5 3.500 6.500 6 8 5l1.500 1 2 4z" /></Mini>
              <input aria-label="Profile height" type="range" defaultValue="0" className={RANGE + "ml-[3px] w-36"} />
              <Mini label="Raise" className="ml-2"><Peaks /></Mini>
            </div>
          </div>
        </div>
      </div>
    </section>
  );
}

export default function App() {
  return (
    <div className="flex h-screen flex-col overflow-hidden bg-[#f0f0f0] font-['Liberation_Sans',Arial,sans-serif] text-black">
      <Gradients />
      <TitleBar />
      <Toolbar />
      <div className="flex min-h-0 flex-1">
        <SideBar />
        <main className="flex min-w-0 flex-1 flex-col">
          <Viewport />
          <CanvasBar />
          <div className="flex h-2 shrink-0 items-center justify-center"><Grip /></div>
          <HeightPanel />
        </main>
        <div className="flex w-2 shrink-0 items-center justify-end"><Grip vertical /></div>
        <aside className="flex w-[346px] shrink-0 flex-col border-l border-[#bcbcbc] pr-0.5 pb-0.5 pl-px pt-[3px]">
          <Tabs names={["Parameters", "Object List"]} />
          <div className="flex-1 border border-[#d9d9d9] bg-white p-px"><div className="h-full bg-[#f0f0f0]" /></div>
        </aside>
      </div>
    </div>
  );
}
